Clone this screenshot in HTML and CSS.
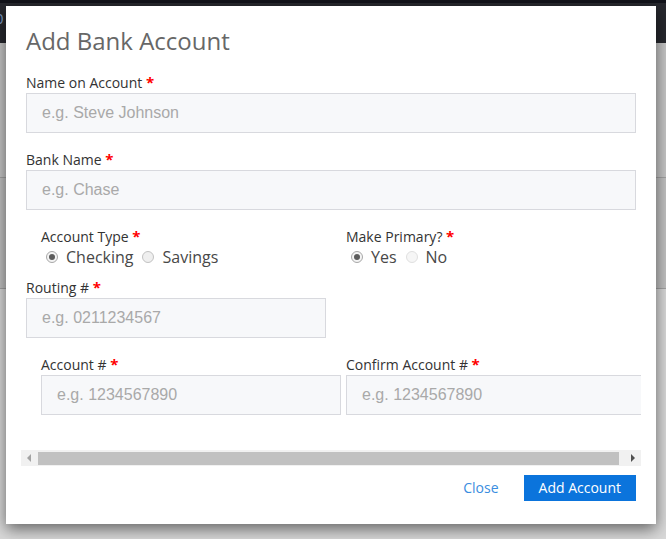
FILE: index.html
```html
<!DOCTYPE html>
<html lang="en">
<head>
<meta charset="utf-8">
<title>Add Bank Account</title>
<link rel="stylesheet" href="styles.css">
</head>
<body>
  <div class="page">
    <div class="page-header"><span class="brand">0</span></div>
    <div class="page-section first"></div>
    <div class="page-section second"></div>
  </div>

  <div class="modal">
    <h2 class="modal-title">Add Bank Account</h2>
    <div class="scroll-area">
      <div class="scroll-viewport">
        <div class="field">
          <label class="field-label">Name on Account <span class="req">*</span></label>
          <input class="input" type="text" placeholder="e.g. Steve Johnson">
        </div>
        <div class="field">
          <label class="field-label">Bank Name <span class="req">*</span></label>
          <input class="input" type="text" placeholder="e.g. Chase">
        </div>
        <div class="row radio-row">
          <div class="col">
            <label class="field-label">Account Type <span class="req">*</span></label>
            <div class="radio-group">
              <span class="radio"><span class="radio-dot checked"></span>Checking</span>
              <span class="radio"><span class="radio-dot"></span>Savings</span>
            </div>
          </div>
          <div class="col">
            <label class="field-label">Make Primary? <span class="req">*</span></label>
            <div class="radio-group">
              <span class="radio"><span class="radio-dot checked"></span>Yes</span>
              <span class="radio"><span class="radio-dot faint"></span>No</span>
            </div>
          </div>
        </div>
        <div class="field">
          <label class="field-label">Routing # <span class="req">*</span></label>
          <input class="input input-narrow" type="text" placeholder="e.g. 0211234567">
        </div>
        <div class="row">
          <div class="col">
            <label class="field-label">Account # <span class="req">*</span></label>
            <input class="input input-narrow" type="text" placeholder="e.g. 1234567890">
          </div>
          <div class="col">
            <label class="field-label">Confirm Account # <span class="req">*</span></label>
            <input class="input input-narrow" type="text" placeholder="e.g. 1234567890">
          </div>
        </div>
      </div>
      <div class="hscroll">
        <span class="hscroll-btn"><span class="tri tri-left"></span></span>
        <span class="hscroll-track"><span class="hscroll-thumb"></span></span>
        <span class="hscroll-btn"><span class="tri tri-right"></span></span>
      </div>
    </div>
    <div class="modal-footer">
      <a class="close-link" href="#">Close</a>
      <button class="btn-primary" type="button">Add Account</button>
    </div>
  </div>
</body>
</html>
```
FILE: styles.css
```css
* { box-sizing: border-box; }

html, body { margin: 0; padding: 0; }

body {
  width: 666px;
  height: 539px;
  overflow: hidden;
  position: relative;
  background: #d9d9d9;
  font-family: "Open Sans", "Liberation Sans", sans-serif;
}

.page-header {
  height: 43px;
  background: #27282e;
  border-top: 3px solid #12131a;
  overflow: hidden;
}

.brand {
  display: block;
  margin-left: -5px;
  line-height: 30px;
  font-size: 15px;
  color: #7d9cc6;
}

.page-section { border-bottom: 1px solid #a3a3a3; }
.page-section.first { height: 135px; background: #c6c6c6; }
.page-section.second { height: 111px; background: #c2c2c2; }

.modal {
  position: absolute;
  left: 6px;
  top: 6px;
  width: 650px;
  background: #fff;
  box-shadow: 0 5px 15px rgba(0, 0, 0, 0.55);
  padding: 19px 15px 23px;
}

.modal-title {
  margin: 0;
  padding-left: 5px;
  font-size: 24px;
  line-height: 32px;
  font-weight: 400;
  color: #676767;
}

.scroll-area {
  height: 409px;
  display: flex;
  flex-direction: column;
}

.scroll-viewport {
  flex: 1;
  overflow: hidden;
  padding: 15px 5px 0;
}

.field { margin-bottom: 16px; }

.field-label {
  display: block;
  font-size: 14px;
  line-height: 21px;
  color: #333;
  white-space: nowrap;
}

.req {
  color: #f00;
  font-weight: 700;
  font-size: 15px;
}

.input {
  display: block;
  width: 100%;
  height: 40px;
  margin: 0;
  border: 1px solid #d8d9de;
  border-radius: 0;
  background: #f7f8fa;
  padding: 0 15px;
  font-family: "Liberation Sans", Arial, sans-serif;
  font-size: 16px;
  color: #333;
  outline: none;
}

.input::placeholder { color: #a9a9a9; opacity: 1; }

.input-narrow { width: 300px; }

.row {
  display: grid;
  grid-template-columns: 305px 305px;
}

.col { padding-left: 15px; min-width: 0; }

.radio-row { margin-bottom: 9px; }

.radio-group {
  display: flex;
  gap: 9px;
  margin-top: -1px;
  padding-left: 5px;
  font-size: 16px;
  line-height: 22px;
  color: #484848;
  white-space: nowrap;
}

.radio {
  display: flex;
  align-items: center;
  gap: 8px;
}

.radio-dot {
  position: relative;
  flex: none;
  width: 12px;
  height: 12px;
  border-radius: 50%;
  border: 1px solid #c2c2c2;
  background: #efefef;
}

.radio-dot.checked {
  border-color: #a8a8a8;
  background: #f4f4f4;
}

.radio-dot.checked::after {
  content: "";
  position: absolute;
  left: 2px;
  top: 2px;
  width: 6px;
  height: 6px;
  border-radius: 50%;
  background: #5c5c5c;
}

.radio-dot.faint {
  border-color: #e0e0e0;
  background: #f6f6f6;
}

.hscroll {
  flex: none;
  height: 16px;
  display: flex;
  background: #f1f1f1;
}

.hscroll-btn {
  flex: none;
  width: 16px;
  display: flex;
  align-items: center;
  justify-content: center;
}

.tri {
  width: 0;
  height: 0;
  border-top: 4px solid transparent;
  border-bottom: 4px solid transparent;
}

.tri-left { border-right: 4px solid #a3a3a3; }
.tri-right { border-left: 4px solid #505050; }

.hscroll-track {
  flex: 1;
  display: flex;
}

.hscroll-thumb {
  flex: 1;
  height: 13px;
  margin: 2px 6px 1px 1px;
  background: #c1c1c1;
}

.modal-footer {
  display: flex;
  justify-content: flex-end;
  align-items: center;
  gap: 25px;
  margin-top: 9px;
  padding-right: 5px;
}

.close-link {
  font-size: 14px;
  line-height: 26px;
  color: #3a8de0;
  text-decoration: none;
}

.btn-primary {
  height: 26px;
  margin: 0;
  padding: 0 15px;
  border: 0;
  border-radius: 0;
  background: #0b74dc;
  color: #fff;
  font-family: "Open Sans", "Liberation Sans", sans-serif;
  font-size: 14px;
  line-height: 26px;
}
```
